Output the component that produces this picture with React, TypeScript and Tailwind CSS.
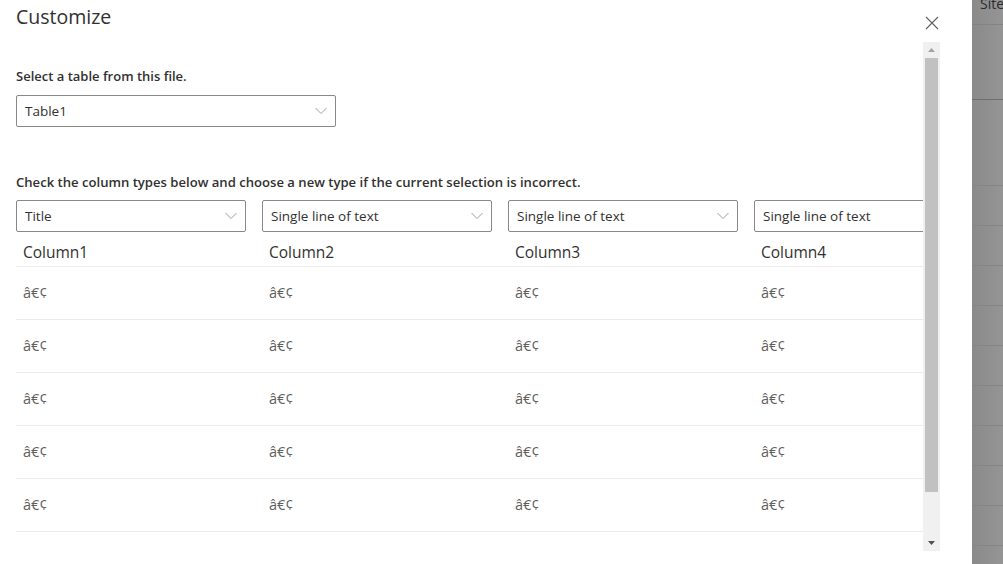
import React from "react";

const font = { fontFamily: '"Open Sans", "Noto Sans", sans-serif' };

function Chevron() {
  return (
    <svg width="12" height="8" viewBox="0 0 12 8" className="shrink-0">
      <path d="M0.5 1 L6 6.5 L11.5 1" fill="none" stroke="#a19f9d" strokeWidth="1" />
    </svg>
  );
}

function Dropdown({ label, width, chevron = true }: { label: string; width: string; chevron?: boolean }) {
  return (
    <div
      className={`${width} h-[32px] shrink-0 border border-[#8a8886] rounded-[2px] flex items-center justify-between pl-[8px] pr-[8px] bg-white`}
    >
      <span className="text-[13.5px] text-[#323130] leading-[20px]">{label}</span>
      {chevron && <Chevron />}
    </div>
  );
}

const cols = ["Column1", "Column2", "Column3", "Column4"];
const types = ["Title", "Single line of text", "Single line of text", "Single line of text"];
const rows = [0, 1, 2, 3, 4];

export default function App() {
  return (
    <div className="w-[1003px] h-[564px] flex overflow-hidden bg-white" style={font}>
      {/* panel */}
      <div className="w-[972px] h-full flex flex-col bg-white">
        {/* header */}
        <div className="h-[42px] flex justify-between items-start">
          <div className="pl-[16px] pt-[4px] text-[19.5px] leading-[26px] text-[#323130]">
            Customize
          </div>
          <div className="mr-[33px] mt-[16px] w-[14px] h-[14px]">
            <svg width="14" height="14" viewBox="0 0 14 14">
              <path d="M1 1 L13 13 M13 1 L1 13" stroke="#605e5c" strokeWidth="1.1" fill="none" />
            </svg>
          </div>
        </div>
        {/* body */}
        <div className="flex h-[509px]">
          <div className="w-[923px] overflow-hidden pl-[16px] pt-[24px]">
            <div className="text-[13px] leading-[20px] font-semibold text-[#323130]">
              Select a table from this file.
            </div>
            <div className="mt-[9px]">
              <Dropdown label="Table1" width="w-[320px]" />
            </div>
            <div className="mt-[45px] text-[13.1px] leading-[20px] font-semibold text-[#323130] whitespace-nowrap">
              Check the column types below and choose a new type if the current selection is incorrect.
            </div>
            <div className="mt-[8px] flex gap-[16px] w-[1000px]">
              {types.map((t, i) => (
                <Dropdown key={i} label={t} width="w-[230px]" chevron={i < 3} />
              ))}
            </div>
            <div className="w-[984px]">
              <div className="flex h-[35px] border-b border-[#edebe9]">
                {cols.map((c) => (
                  <div key={c} className="w-[246px] shrink-0 pl-[7px] pt-[10px] text-[15.5px] leading-[20px] text-[#323130]">
                    {c}
                  </div>
                ))}
              </div>
              {rows.map((r) => (
                <div key={r} className="flex h-[53px] border-b border-[#edebe9]">
                  {cols.map((c) => (
                    <div key={c} className="w-[246px] shrink-0 pl-[7px] pt-[16px] text-[14.5px] leading-[20px] text-[#605e5c]">
                      â€¢
                    </div>
                  ))}
                </div>
              ))}
            </div>
          </div>
          {/* scrollbar */}
          <div className="w-[17px] h-[509px] bg-[#f0f0f0] flex flex-col items-center">
            <div className="h-[16px] flex items-center justify-center">
              <svg width="7" height="4" viewBox="0 0 7 4">
                <path d="M0 4 L3.5 0 L7 4 Z" fill="#a3a3a3" />
              </svg>
            </div>
            <div className="w-[13px] h-[434px] bg-[#c1c1c1]" />
            <div className="flex-1" />
            <div className="h-[16px] flex items-center justify-center">
              <svg width="7" height="4" viewBox="0 0 7 4">
                <path d="M0 0 L3.5 4 L7 0 Z" fill="#505050" />
              </svg>
            </div>
          </div>
        </div>
      </div>
      {/* backdrop */}
      <div className="w-[31px] h-full bg-gradient-to-r from-[#8a8a8a] to-[#959595] flex flex-col">
        <div className="h-[25px] border-b border-[#838383] pl-[8px] text-[14px] leading-[12px] text-[#2a2a2a] overflow-hidden">
          <div className="-mt-[2px] whitespace-nowrap">Site</div>
        </div>
        <div className="h-[75px] border-b border-[#6e6e6e]" />
        <div className="h-[86px] border-b border-[#858585]" />
        {[0, 1, 2, 3, 4, 5, 6, 7, 8].map((i) => (
          <div key={i} className="h-[40px] shrink-0 border-b border-[#858585]" />
        ))}
      </div>
    </div>
  );
}
